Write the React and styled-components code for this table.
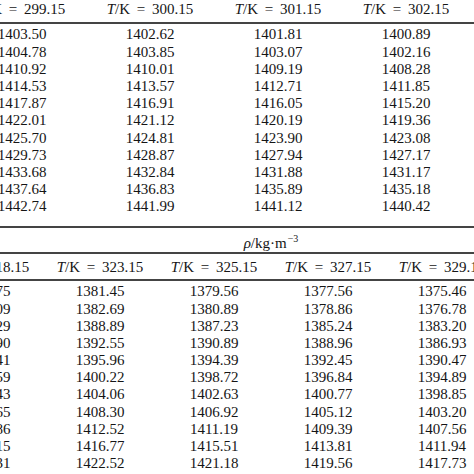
import React from 'react';
import styled, { createGlobalStyle } from 'styled-components';

const Global = createGlobalStyle`
  html, body { margin: 0; padding: 0; background: #fff; }
  body {
    font-family: "Liberation Serif", "Times New Roman", serif;
    color: #151515;
  }
`;

const Page = styled.main`
  width: 474px;
  height: 474px;
  overflow: hidden;
  background: #fff;
`;

const Table = styled.section`
  margin-left: ${p => p.$shift}px;
  width: ${p => p.$width}px;
  font-size: 15px;
`;

const Grid = styled.div`
  display: grid;
  grid-template-columns: repeat(${p => p.$cols}, ${p => p.$col}px);
`;

const HeadRow = styled(Grid)`
  padding: ${p => p.$pt}px 0 ${p => p.$pb}px;
  border-bottom: 2px solid #444;
  line-height: 18px;
`;

const Body = styled.div`
  padding: 2.4px 0 ${p => p.$pb}px;
  border-bottom: ${p => (p.$rule ? '2px solid #444' : 'none')};
`;

const Row = styled(Grid)`
  height: 17.2px;
  line-height: 17.2px;
`;

const Cell = styled.div`
  text-align: center;
  white-space: nowrap;
`;

const Spanner = styled.div`
  grid-column: 2 / span ${p => p.$span};
  text-align: center;
  white-space: nowrap;
`;

const Sym = styled.i`
  font-style: italic;
`;

const Eq = styled.span`
  margin: 0 3px;
`;

const Sup = styled.sup`
  font-size: 10px;
  line-height: 0;
  vertical-align: 6px;
  margin-left: 1px;
`;

const TK = ({ t }) => (
  <Cell>
    <Sym>T</Sym>/K <Eq>=</Eq> {t}
  </Cell>
);

const top = {
  temps: ['299.15', '300.15', '301.15', '302.15'],
  cols: [
    ['1403.50', '1404.78', '1410.92', '1414.53', '1417.87', '1422.01', '1425.70', '1429.73', '1433.68', '1437.64', '1442.74'],
    ['1402.62', '1403.85', '1410.01', '1413.57', '1416.91', '1421.12', '1424.81', '1428.87', '1432.84', '1436.83', '1441.99'],
    ['1401.81', '1403.07', '1409.19', '1412.71', '1416.05', '1420.19', '1423.90', '1427.94', '1431.88', '1435.89', '1441.12'],
    ['1400.89', '1402.16', '1408.28', '1411.85', '1415.20', '1419.36', '1423.08', '1427.17', '1431.17', '1435.18', '1440.42'],
  ],
};

const bottom = {
  temps: ['318.15', '323.15', '325.15', '327.15', '329.15'],
  cols: [
    ['1383.75', '1385.09', '1391.29', '1394.90', '1398.41', '1402.59', '1406.43', '1410.65', '1414.86', '1419.15', '1424.31'],
    ['1381.45', '1382.69', '1388.89', '1392.55', '1395.96', '1400.22', '1404.06', '1408.30', '1412.52', '1416.77', '1422.52'],
    ['1379.56', '1380.89', '1387.23', '1390.89', '1394.39', '1398.72', '1402.63', '1406.92', '1411.19', '1415.51', '1421.18'],
    ['1377.56', '1378.86', '1385.24', '1388.96', '1392.45', '1396.84', '1400.77', '1405.12', '1409.39', '1413.81', '1419.56'],
    ['1375.46', '1376.78', '1383.20', '1386.93', '1390.47', '1394.89', '1398.85', '1403.20', '1407.56', '1411.94', '1417.73'],
  ],
};

const rowsOf = cols => cols[0].map((_, i) => cols.map(c => c[i]));

export default function App() {
  const tc = top.cols.length;
  const bc = bottom.cols.length;
  return (
    <>
      <Global />
      <Page>
        <Table $shift={-42} $width={516}>
          <HeadRow $cols={tc} $col={128} $pt={0} $pb={4}>
            {top.temps.map(t => (
              <TK key={t} t={t} />
            ))}
          </HeadRow>
          <Body $pb={11} $rule>
            {rowsOf(top.cols).map((r, i) => (
              <Row key={i} $cols={tc} $col={128}>
                {r.map((v, j) => (
                  <Cell key={j}>{v}</Cell>
                ))}
              </Row>
            ))}
          </Body>
        </Table>
        <Table $shift={-71} $width={570}>
          <HeadRow $cols={bc} $col={114} $pt={5.5} $pb={0}>
            <Spanner $span={bc - 1}>
              <Sym>ρ</Sym>/kg·m<Sup>−3</Sup>
            </Spanner>
          </HeadRow>
          <HeadRow $cols={bc} $col={114} $pt={4} $pb={3}>
            {bottom.temps.map(t => (
              <TK key={t} t={t} />
            ))}
          </HeadRow>
          <Body $pb={0}>
            {rowsOf(bottom.cols).map((r, i) => (
              <Row key={i} $cols={bc} $col={114}>
                {r.map((v, j) => (
                  <Cell key={j}>{v}</Cell>
                ))}
              </Row>
            ))}
          </Body>
        </Table>
      </Page>
    </>
  );
}
